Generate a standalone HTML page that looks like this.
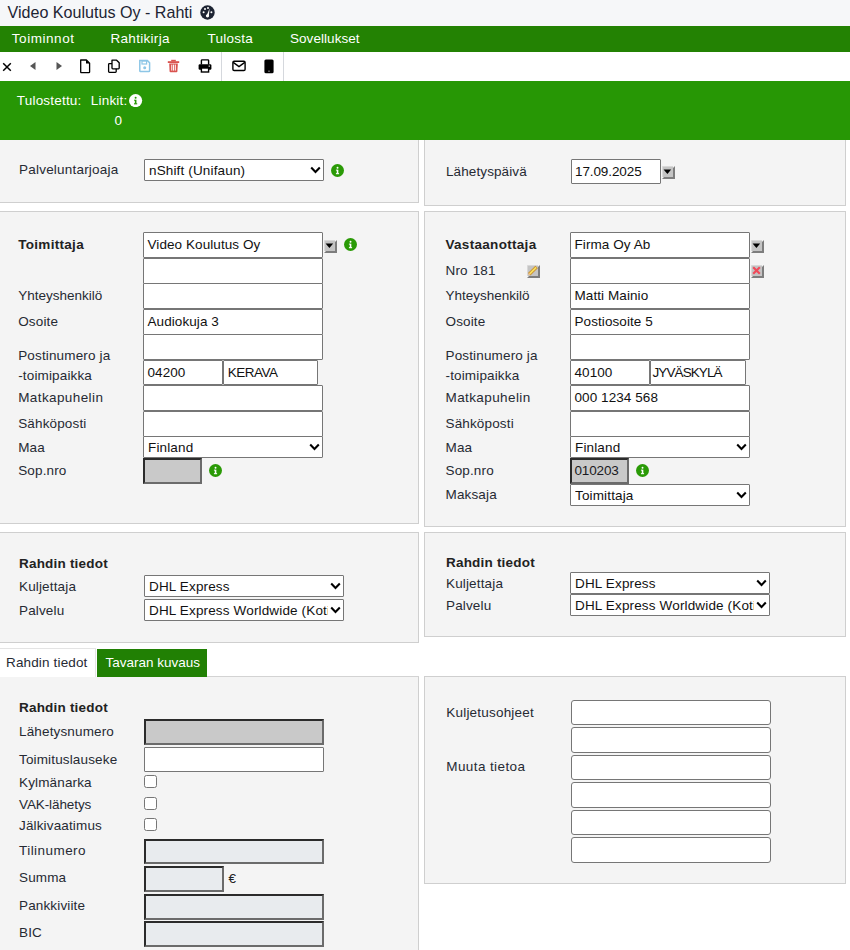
<!DOCTYPE html><html><head><meta charset="utf-8"><style>
html,body{margin:0;padding:0;}
body{width:850px;height:950px;overflow:hidden;position:relative;background:#fff;font-family:"Liberation Sans",sans-serif;}
.a{position:absolute;}
.t{white-space:nowrap;}
</style></head><body>
<div class="a" style="left:0px;top:0px;width:850px;height:26px;background:#f6f7f9;"></div>
<div class="a t" style="left:7.5px;top:2.42px;font-size:16.1px;line-height:20px;font-weight:400;color:#1d2433;letter-spacing:0px;">Video Koulutus Oy - Rahti</div>
<svg class="a" style="left:200px;top:4.5px" width="15" height="15" viewBox="0 0 15 15"><circle cx="7.5" cy="7.5" r="7.2" fill="#1d2433"/><circle cx="3.6" cy="7.2" r="1" fill="#fff"/><circle cx="5" cy="4" r="1" fill="#fff"/><circle cx="8" cy="2.9" r="1" fill="#fff"/><circle cx="11.4" cy="7.2" r="1" fill="#fff"/><path d="M6.3 11.2 L9.6 3.6 L8.8 11.2 Z" fill="#fff"/><circle cx="7.5" cy="10.8" r="1.6" fill="#fff"/></svg>
<div class="a" style="left:0px;top:26px;width:850px;height:26px;background:#238203;"></div>
<div class="a t" style="left:11.8px;top:29.82px;font-size:13.5px;line-height:17px;font-weight:400;color:#fff;letter-spacing:0.55px;">Toiminnot</div>
<div class="a t" style="left:110.5px;top:29.82px;font-size:13.5px;line-height:17px;font-weight:400;color:#fff;letter-spacing:0.3px;">Rahtikirja</div>
<div class="a t" style="left:207.5px;top:29.82px;font-size:13.5px;line-height:17px;font-weight:400;color:#fff;letter-spacing:0.25px;">Tulosta</div>
<div class="a t" style="left:290.0px;top:29.82px;font-size:13.5px;line-height:17px;font-weight:400;color:#fff;letter-spacing:0.05px;">Sovellukset</div>
<div class="a" style="left:0px;top:52px;width:850px;height:29px;background:#fff;"></div>
<div class="a" style="left:221px;top:52px;width:1px;height:29px;background:#d5d8dd;"></div>
<div class="a" style="left:283px;top:52px;width:1px;height:29px;background:#d5d8dd;"></div>
<svg class="a" style="left:2px;top:61.5px" width="10" height="10" viewBox="0 0 10 10"><path d="M1.2 1.2 L8.8 8.8 M8.8 1.2 L1.2 8.8" stroke="#000" stroke-width="1.5"/></svg>
<svg class="a" style="left:29px;top:61px" width="8" height="10" viewBox="0 0 8 10"><path d="M6.5 1 L1 5 L6.5 9 Z" fill="#555"/></svg>
<svg class="a" style="left:55px;top:61px" width="8" height="10" viewBox="0 0 8 10"><path d="M1.5 1 L7 5 L1.5 9 Z" fill="#555"/></svg>
<svg class="a" style="left:79px;top:59px" width="12" height="15" viewBox="0 0 12 15"><path d="M1.7 1 L7.4 1 L10.6 4.2 L10.6 12.9 Q10.6 13.6 9.9 13.6 L2.4 13.6 Q1.7 13.6 1.7 12.9 Z" fill="none" stroke="#000" stroke-width="1.3" stroke-linejoin="round"/><path d="M7 1 L10.6 4.6 L7 4.6 Z" fill="#000"/></svg>
<svg class="a" style="left:107px;top:59px" width="14" height="15" viewBox="0 0 14 15"><path d="M5 1.2 L9.6 1.2 L12.2 3.8 L12.2 9 Q12.2 9.8 11.4 9.8 L5.8 9.8 Q5 9.8 5 9 Z" fill="none" stroke="#000" stroke-width="1.3" stroke-linejoin="round"/><path d="M5 4.6 L2.4 4.6 Q1.6 4.6 1.6 5.4 L1.6 12.6 Q1.6 13.4 2.4 13.4 L8.4 13.4 Q9.2 13.4 9.2 12.6 L9.2 9.8" fill="none" stroke="#000" stroke-width="1.3"/></svg>
<svg class="a" style="left:138px;top:59px" width="13" height="14" viewBox="0 0 13 14"><path d="M1.8 1.6 L9.4 1.6 L11.6 3.8 L11.6 11.8 Q11.6 12.6 10.8 12.6 L2.6 12.6 Q1.8 12.6 1.8 11.8 Z" fill="none" stroke="#8dc6e6" stroke-width="1.5"/><rect x="4" y="2" width="4.6" height="3" fill="none" stroke="#8dc6e6" stroke-width="1.2"/><circle cx="6.7" cy="8.8" r="1.5" fill="#8dc6e6"/></svg>
<svg class="a" style="left:167px;top:59px" width="13" height="14" viewBox="0 0 13 14"><rect x="0.8" y="2.2" width="11.4" height="1.8" fill="#d9534f"/><rect x="4.2" y="0.8" width="4.6" height="1.6" fill="#d9534f"/><path d="M2.2 4.6 L2.6 12.4 Q2.7 13.2 3.5 13.2 L9.5 13.2 Q10.3 13.2 10.4 12.4 L10.8 4.6 Z" fill="#d9534f"/><rect x="4.3" y="5.6" width="1" height="6" fill="#fff"/><rect x="6.05" y="5.6" width="1" height="6" fill="#fff"/><rect x="7.8" y="5.6" width="1" height="6" fill="#fff"/></svg>
<svg class="a" style="left:197.5px;top:59px" width="14" height="14" viewBox="0 0 14 14"><path d="M3.4 5.6 L3.4 1.6 Q3.4 0.9 4.1 0.9 L9.9 0.9 Q10.6 0.9 10.6 1.6 L10.6 5.6" fill="none" stroke="#000" stroke-width="1.4"/><rect x="0.6" y="5.2" width="12.8" height="5.6" rx="1.2" fill="#000"/><rect x="3.4" y="9" width="7.2" height="4" fill="#fff" stroke="#000" stroke-width="1.4"/><rect x="10.6" y="6.6" width="1.4" height="1" fill="#fff"/></svg>
<svg class="a" style="left:232px;top:60px" width="14" height="12" viewBox="0 0 14 12"><rect x="0.9" y="1.3" width="12.2" height="9.2" rx="1.2" fill="none" stroke="#000" stroke-width="1.4"/><path d="M1.2 2.4 L7 6.6 L12.8 2.4" fill="none" stroke="#000" stroke-width="1.4"/></svg>
<svg class="a" style="left:264px;top:59px" width="10" height="15" viewBox="0 0 10 15"><rect x="0.4" y="0.6" width="9.2" height="13.6" rx="1.5" fill="#000"/><rect x="4.2" y="11.6" width="1.6" height="1.2" fill="#888"/></svg>
<div class="a" style="left:0px;top:81px;width:850px;height:59px;background:#279705;"></div>
<div class="a t" style="left:16.8px;top:92.12px;font-size:13.5px;line-height:17px;font-weight:400;color:#fff;letter-spacing:0.2px;">Tulostettu:</div>
<div class="a t" style="left:90.8px;top:92.12px;font-size:13.5px;line-height:17px;font-weight:400;color:#fff;letter-spacing:0.2px;">Linkit:</div>
<svg class="a" style="left:129.4px;top:93.7px" width="13.2" height="13.2" viewBox="0 0 14 14"><circle cx="7" cy="7" r="7" fill="#fff"/><rect x="6.2" y="6.1" width="1.7" height="4.2" fill="#279705"/><rect x="5.3" y="9.8" width="3.4" height="1.2" fill="#279705"/><rect x="5.3" y="6.1" width="1.2" height="1" fill="#279705"/><circle cx="7.05" cy="4.1" r="1.05" fill="#279705"/></svg>
<div class="a t" style="left:114.5px;top:111.82px;font-size:13.5px;line-height:17px;font-weight:400;color:#fff;letter-spacing:0px;">0</div>
<div class="a" style="left:-1px;top:140px;width:420px;height:63px;box-sizing:border-box;background:#f4f4f4;border:1px solid #cfcfcf;border-top:none;"></div>
<div class="a" style="left:424px;top:140px;width:422px;height:66px;box-sizing:border-box;background:#f4f4f4;border:1px solid #cfcfcf;border-top:none;"></div>
<div class="a t" style="left:19.1px;top:160.52px;font-size:13.5px;line-height:17px;font-weight:400;color:#262a33;letter-spacing:0.2px;">Palveluntarjoaja</div>
<div class="a" style="left:144px;top:159px;width:180px;height:22px;box-sizing:border-box;border:1px solid #767676;border-radius:1px;background:#fff;"></div>
<div class="a t" style="left:149px;top:161.82px;width:159px;overflow:hidden;font-size:13.5px;line-height:17px;color:#111;letter-spacing:0.15px">nShift (Unifaun)</div>
<svg class="a" style="left:309.5px;top:166.0px" width="11" height="8" viewBox="0 0 11 8"><path d="M1.2 1.6 L5.5 5.9 L9.8 1.6" fill="none" stroke="#000" stroke-width="2.1"/></svg>
<svg class="a" style="left:330.5px;top:163.5px" width="13.0" height="13.0" viewBox="0 0 14 14"><circle cx="7" cy="7" r="7" fill="#2a9a06"/><rect x="6.2" y="6.1" width="1.7" height="4.2" fill="#fff"/><rect x="5.3" y="9.8" width="3.4" height="1.2" fill="#fff"/><rect x="5.3" y="6.1" width="1.2" height="1" fill="#fff"/><circle cx="7.05" cy="4.1" r="1.05" fill="#fff"/></svg>
<div class="a t" style="left:446.0px;top:162.82px;font-size:13.5px;line-height:17px;font-weight:400;color:#262a33;letter-spacing:0.1px;">Lähetyspäivä</div>
<div class="a" style="left:571px;top:159px;width:90px;height:25px;box-sizing:border-box;border:1px solid #767676;border-radius:1px;background:#fff;"></div>
<div class="a t" style="left:575.0px;top:162.82px;font-size:13.5px;line-height:17px;font-weight:400;color:#111;letter-spacing:-0.1px;">17.09.2025</div>
<svg class="a" style="left:662px;top:166px" width="13" height="13" viewBox="0 0 13 13"><path d="M13 0 L13 13 L0 13 L2 11 L11 11 L11 2 Z" fill="#7d7d7d"/><rect x="0" y="0" width="11" height="11" fill="#dedede"/><rect x="0.8" y="0.8" width="10.2" height="10.2" fill="#c4c4c4"/><path d="M1.6 3.6 L9.2 3.6 L5.4 8 Z" fill="#000"/></svg>
<div class="a" style="left:-1px;top:211px;width:420px;height:313px;box-sizing:border-box;background:#f4f4f4;border:1px solid #cfcfcf;"></div>
<div class="a" style="left:424px;top:211px;width:422px;height:316px;box-sizing:border-box;background:#f4f4f4;border:1px solid #cfcfcf;"></div>
<div class="a t" style="left:18.2px;top:236.22px;font-size:13.5px;line-height:17px;font-weight:700;color:#222;letter-spacing:0.3px;">Toimittaja</div>
<div class="a" style="left:143px;top:232px;width:180px;height:26px;box-sizing:border-box;border:1px solid #767676;border-radius:1px;background:#fff;"></div>
<div class="a t" style="left:147.5px;top:235.82px;font-size:13.5px;line-height:17px;font-weight:400;color:#111;letter-spacing:0.08px;">Video Koulutus Oy</div>
<svg class="a" style="left:324px;top:240px" width="13" height="13" viewBox="0 0 13 13"><path d="M13 0 L13 13 L0 13 L2 11 L11 11 L11 2 Z" fill="#7d7d7d"/><rect x="0" y="0" width="11" height="11" fill="#dedede"/><rect x="0.8" y="0.8" width="10.2" height="10.2" fill="#c4c4c4"/><path d="M1.6 3.6 L9.2 3.6 L5.4 8 Z" fill="#000"/></svg>
<svg class="a" style="left:343.5px;top:237.5px" width="13.0" height="13.0" viewBox="0 0 14 14"><circle cx="7" cy="7" r="7" fill="#2a9a06"/><rect x="6.2" y="6.1" width="1.7" height="4.2" fill="#fff"/><rect x="5.3" y="9.8" width="3.4" height="1.2" fill="#fff"/><rect x="5.3" y="6.1" width="1.2" height="1" fill="#fff"/><circle cx="7.05" cy="4.1" r="1.05" fill="#fff"/></svg>
<div class="a" style="left:143px;top:258px;width:180px;height:26px;box-sizing:border-box;border:1px solid #767676;border-radius:1px;background:#fff;"></div>
<div class="a t" style="left:18.2px;top:287.12px;font-size:13.5px;line-height:17px;font-weight:400;color:#262a33;letter-spacing:0.0px;">Yhteyshenkilö</div>
<div class="a" style="left:143px;top:283px;width:180px;height:26px;box-sizing:border-box;border:1px solid #767676;border-radius:1px;background:#fff;"></div>
<div class="a t" style="left:18.2px;top:312.82px;font-size:13.5px;line-height:17px;font-weight:400;color:#262a33;letter-spacing:0.15px;">Osoite</div>
<div class="a" style="left:143px;top:309px;width:180px;height:26px;box-sizing:border-box;border:1px solid #767676;border-radius:1px;background:#fff;"></div>
<div class="a t" style="left:147.5px;top:312.82px;font-size:13.5px;line-height:17px;font-weight:400;color:#111;letter-spacing:0.08px;">Audiokuja 3</div>
<div class="a" style="left:143px;top:334px;width:180px;height:26px;box-sizing:border-box;border:1px solid #767676;border-radius:1px;background:#fff;"></div>
<div class="a t" style="left:18.2px;top:346.82px;font-size:13.5px;line-height:17px;font-weight:400;color:#262a33;letter-spacing:0.15px;">Postinumero ja</div>
<div class="a t" style="left:18.2px;top:366.82px;font-size:13.5px;line-height:17px;font-weight:400;color:#262a33;letter-spacing:0.15px;">-toimipaikka</div>
<div class="a" style="left:143px;top:360px;width:80px;height:25px;box-sizing:border-box;border:1px solid #767676;border-radius:1px;background:#fff;"></div>
<div class="a t" style="left:147.5px;top:363.82px;font-size:13.5px;line-height:17px;font-weight:400;color:#111;letter-spacing:0.08px;">04200</div>
<div class="a" style="left:222.8px;top:360px;width:95px;height:25px;box-sizing:border-box;border:1px solid #767676;border-radius:1px;background:#fff;"></div>
<div class="a t" style="left:227.8px;top:363.82px;font-size:13.5px;line-height:17px;font-weight:400;color:#111;letter-spacing:-0.5px;">KERAVA</div>
<div class="a t" style="left:18.2px;top:389.12px;font-size:13.5px;line-height:17px;font-weight:400;color:#262a33;letter-spacing:0.4px;">Matkapuhelin</div>
<div class="a" style="left:143px;top:385px;width:180px;height:26px;box-sizing:border-box;border:1px solid #767676;border-radius:1px;background:#fff;"></div>
<div class="a t" style="left:18.2px;top:414.82px;font-size:13.5px;line-height:17px;font-weight:400;color:#262a33;letter-spacing:0.15px;">Sähköposti</div>
<div class="a" style="left:143px;top:410.5px;width:180px;height:26px;box-sizing:border-box;border:1px solid #767676;border-radius:1px;background:#fff;"></div>
<div class="a t" style="left:18.2px;top:438.82px;font-size:13.5px;line-height:17px;font-weight:400;color:#262a33;letter-spacing:0.15px;">Maa</div>
<div class="a" style="left:143px;top:436px;width:180px;height:22px;box-sizing:border-box;border:1px solid #767676;border-radius:1px;background:#fff;"></div>
<div class="a t" style="left:148px;top:438.82px;width:159px;overflow:hidden;font-size:13.5px;line-height:17px;color:#111;letter-spacing:0.15px">Finland</div>
<svg class="a" style="left:308.5px;top:443.0px" width="11" height="8" viewBox="0 0 11 8"><path d="M1.2 1.6 L5.5 5.9 L9.8 1.6" fill="none" stroke="#000" stroke-width="2.1"/></svg>
<div class="a t" style="left:18.2px;top:461.82px;font-size:13.5px;line-height:17px;font-weight:400;color:#262a33;letter-spacing:0.15px;">Sop.nro</div>
<div class="a" style="left:143px;top:458px;width:59px;height:26px;box-sizing:border-box;border:2px solid #2b2b2b;border-right-color:#6b6b6b;border-bottom-color:#6b6b6b;background:#c9c9c9;"></div>
<svg class="a" style="left:208.5px;top:463.5px" width="13.0" height="13.0" viewBox="0 0 14 14"><circle cx="7" cy="7" r="7" fill="#2a9a06"/><rect x="6.2" y="6.1" width="1.7" height="4.2" fill="#fff"/><rect x="5.3" y="9.8" width="3.4" height="1.2" fill="#fff"/><rect x="5.3" y="6.1" width="1.2" height="1" fill="#fff"/><circle cx="7.05" cy="4.1" r="1.05" fill="#fff"/></svg>
<div class="a t" style="left:445.5px;top:235.82px;font-size:13.5px;line-height:17px;font-weight:700;color:#222;letter-spacing:0.3px;">Vastaanottaja</div>
<div class="a" style="left:570px;top:232px;width:180px;height:26px;box-sizing:border-box;border:1px solid #767676;border-radius:1px;background:#fff;"></div>
<div class="a t" style="left:574.5px;top:235.82px;font-size:13.5px;line-height:17px;font-weight:400;color:#111;letter-spacing:0.08px;">Firma Oy Ab</div>
<svg class="a" style="left:751px;top:240px" width="13" height="13" viewBox="0 0 13 13"><path d="M13 0 L13 13 L0 13 L2 11 L11 11 L11 2 Z" fill="#7d7d7d"/><rect x="0" y="0" width="11" height="11" fill="#dedede"/><rect x="0.8" y="0.8" width="10.2" height="10.2" fill="#c4c4c4"/><path d="M1.6 3.6 L9.2 3.6 L5.4 8 Z" fill="#000"/></svg>
<div class="a t" style="left:445.5px;top:262.22px;font-size:13.5px;line-height:17px;font-weight:400;color:#262a33;letter-spacing:0.15px;">Nro</div>
<div class="a t" style="left:472.7px;top:262.22px;font-size:13.5px;line-height:17px;font-weight:400;color:#262a33;letter-spacing:0.15px;">181</div>
<svg class="a" style="left:527px;top:265px" width="13" height="13" viewBox="0 0 13 13"><path d="M13 0 L13 13 L0 13 L2 11 L11 11 L11 2 Z" fill="#7d7d7d"/><rect x="0" y="0" width="11" height="11" fill="#dedede"/><rect x="0.8" y="0.8" width="10.2" height="10.2" fill="#c4c4c4"/><path d="M2.2 9.2 L9.6 2" stroke="#c98a2a" stroke-width="3.4"/><path d="M2.6 8.8 L9.2 2.4" stroke="#f6e060" stroke-width="1.8"/><path d="M1.6 10 L2.8 8.6" stroke="#eec08a" stroke-width="1.6"/></svg>
<div class="a" style="left:570px;top:258px;width:180px;height:26px;box-sizing:border-box;border:1px solid #767676;border-radius:1px;background:#fff;"></div>
<svg class="a" style="left:751px;top:265px" width="13" height="13" viewBox="0 0 13 13"><path d="M13 0 L13 13 L0 13 L2 11 L11 11 L11 2 Z" fill="#7d7d7d"/><rect x="0" y="0" width="11" height="11" fill="#dedede"/><rect x="0.8" y="0.8" width="10.2" height="10.2" fill="#c4c4c4"/><path d="M2.2 2.2 L8.8 8.8 M8.8 2.2 L2.2 8.8" stroke="#f04a5a" stroke-width="2.2"/></svg>
<div class="a t" style="left:445.5px;top:287.12px;font-size:13.5px;line-height:17px;font-weight:400;color:#262a33;letter-spacing:0.0px;">Yhteyshenkilö</div>
<div class="a" style="left:570px;top:283px;width:180px;height:26px;box-sizing:border-box;border:1px solid #767676;border-radius:1px;background:#fff;"></div>
<div class="a t" style="left:574.5px;top:286.82px;font-size:13.5px;line-height:17px;font-weight:400;color:#111;letter-spacing:0.08px;">Matti Mainio</div>
<div class="a t" style="left:445.5px;top:312.82px;font-size:13.5px;line-height:17px;font-weight:400;color:#262a33;letter-spacing:0.15px;">Osoite</div>
<div class="a" style="left:570px;top:309px;width:180px;height:26px;box-sizing:border-box;border:1px solid #767676;border-radius:1px;background:#fff;"></div>
<div class="a t" style="left:574.5px;top:312.82px;font-size:13.5px;line-height:17px;font-weight:400;color:#111;letter-spacing:0.08px;">Postiosoite 5</div>
<div class="a" style="left:570px;top:334px;width:180px;height:26px;box-sizing:border-box;border:1px solid #767676;border-radius:1px;background:#fff;"></div>
<div class="a t" style="left:445.5px;top:346.82px;font-size:13.5px;line-height:17px;font-weight:400;color:#262a33;letter-spacing:0.15px;">Postinumero ja</div>
<div class="a t" style="left:445.5px;top:366.82px;font-size:13.5px;line-height:17px;font-weight:400;color:#262a33;letter-spacing:0.15px;">-toimipaikka</div>
<div class="a" style="left:570px;top:360px;width:80px;height:25px;box-sizing:border-box;border:1px solid #767676;border-radius:1px;background:#fff;"></div>
<div class="a t" style="left:574.5px;top:363.82px;font-size:13.5px;line-height:17px;font-weight:400;color:#111;letter-spacing:0.08px;">40100</div>
<div class="a" style="left:649.5px;top:360px;width:96px;height:25px;box-sizing:border-box;border:1px solid #767676;border-radius:1px;background:#fff;"></div>
<div class="a t" style="left:652.5px;top:363.82px;font-size:13.5px;line-height:17px;font-weight:400;color:#111;letter-spacing:-0.9px;">JYVÄSKYLÄ</div>
<div class="a t" style="left:445.5px;top:389.12px;font-size:13.5px;line-height:17px;font-weight:400;color:#262a33;letter-spacing:0.4px;">Matkapuhelin</div>
<div class="a" style="left:570px;top:385px;width:180px;height:26px;box-sizing:border-box;border:1px solid #767676;border-radius:1px;background:#fff;"></div>
<div class="a t" style="left:574.5px;top:388.82px;font-size:13.5px;line-height:17px;font-weight:400;color:#111;letter-spacing:0.08px;">000 1234 568</div>
<div class="a t" style="left:445.5px;top:414.82px;font-size:13.5px;line-height:17px;font-weight:400;color:#262a33;letter-spacing:0.15px;">Sähköposti</div>
<div class="a" style="left:570px;top:410.5px;width:180px;height:26px;box-sizing:border-box;border:1px solid #767676;border-radius:1px;background:#fff;"></div>
<div class="a t" style="left:445.5px;top:438.82px;font-size:13.5px;line-height:17px;font-weight:400;color:#262a33;letter-spacing:0.15px;">Maa</div>
<div class="a" style="left:570px;top:436px;width:180px;height:22px;box-sizing:border-box;border:1px solid #767676;border-radius:1px;background:#fff;"></div>
<div class="a t" style="left:575px;top:438.82px;width:159px;overflow:hidden;font-size:13.5px;line-height:17px;color:#111;letter-spacing:0.15px">Finland</div>
<svg class="a" style="left:735.5px;top:443.0px" width="11" height="8" viewBox="0 0 11 8"><path d="M1.2 1.6 L5.5 5.9 L9.8 1.6" fill="none" stroke="#000" stroke-width="2.1"/></svg>
<div class="a t" style="left:445.5px;top:461.82px;font-size:13.5px;line-height:17px;font-weight:400;color:#262a33;letter-spacing:0.15px;">Sop.nro</div>
<div class="a" style="left:570px;top:458px;width:59px;height:26px;box-sizing:border-box;border:2px solid #2b2b2b;border-right-color:#6b6b6b;border-bottom-color:#6b6b6b;background:#c9c9c9;"></div>
<div class="a t" style="left:574.5px;top:461.82px;font-size:13.5px;line-height:17px;font-weight:400;color:#1a1a22;letter-spacing:-0.15px;">010203</div>
<svg class="a" style="left:635.5px;top:463.5px" width="13.0" height="13.0" viewBox="0 0 14 14"><circle cx="7" cy="7" r="7" fill="#2a9a06"/><rect x="6.2" y="6.1" width="1.7" height="4.2" fill="#fff"/><rect x="5.3" y="9.8" width="3.4" height="1.2" fill="#fff"/><rect x="5.3" y="6.1" width="1.2" height="1" fill="#fff"/><circle cx="7.05" cy="4.1" r="1.05" fill="#fff"/></svg>
<div class="a t" style="left:445.5px;top:485.82px;font-size:13.5px;line-height:17px;font-weight:400;color:#262a33;letter-spacing:0.15px;">Maksaja</div>
<div class="a" style="left:570px;top:484px;width:180px;height:22px;box-sizing:border-box;border:1px solid #767676;border-radius:1px;background:#fff;"></div>
<div class="a t" style="left:575px;top:486.82px;width:159px;overflow:hidden;font-size:13.5px;line-height:17px;color:#111;letter-spacing:0.15px">Toimittaja</div>
<svg class="a" style="left:735.5px;top:491.0px" width="11" height="8" viewBox="0 0 11 8"><path d="M1.2 1.6 L5.5 5.9 L9.8 1.6" fill="none" stroke="#000" stroke-width="2.1"/></svg>
<div class="a" style="left:-1px;top:532px;width:420px;height:111px;box-sizing:border-box;background:#f4f4f4;border:1px solid #cfcfcf;"></div>
<div class="a" style="left:424px;top:532px;width:422px;height:105px;box-sizing:border-box;background:#f4f4f4;border:1px solid #cfcfcf;"></div>
<div class="a t" style="left:19.0px;top:554.82px;font-size:13.5px;line-height:17px;font-weight:700;color:#222;letter-spacing:0.2px;">Rahdin tiedot</div>
<div class="a t" style="left:19.0px;top:577.82px;font-size:13.5px;line-height:17px;font-weight:400;color:#262a33;letter-spacing:0.15px;">Kuljettaja</div>
<div class="a" style="left:144px;top:575px;width:200px;height:22px;box-sizing:border-box;border:1px solid #767676;border-radius:1px;background:#fff;"></div>
<div class="a t" style="left:149px;top:577.82px;width:179px;overflow:hidden;font-size:13.5px;line-height:17px;color:#111;letter-spacing:0.15px">DHL Express</div>
<svg class="a" style="left:329.5px;top:582.0px" width="11" height="8" viewBox="0 0 11 8"><path d="M1.2 1.6 L5.5 5.9 L9.8 1.6" fill="none" stroke="#000" stroke-width="2.1"/></svg>
<div class="a t" style="left:19.0px;top:601.62px;font-size:13.5px;line-height:17px;font-weight:400;color:#262a33;letter-spacing:0.15px;">Palvelu</div>
<div class="a" style="left:144px;top:599px;width:200px;height:22px;box-sizing:border-box;border:1px solid #767676;border-radius:1px;background:#fff;"></div>
<div class="a t" style="left:149px;top:601.82px;width:179px;overflow:hidden;font-size:13.5px;line-height:17px;color:#111;letter-spacing:0.15px">DHL Express Worldwide (Kotimaa)</div>
<svg class="a" style="left:329.5px;top:606.0px" width="11" height="8" viewBox="0 0 11 8"><path d="M1.2 1.6 L5.5 5.9 L9.8 1.6" fill="none" stroke="#000" stroke-width="2.1"/></svg>
<div class="a t" style="left:446.0px;top:553.82px;font-size:13.5px;line-height:17px;font-weight:700;color:#222;letter-spacing:0.2px;">Rahdin tiedot</div>
<div class="a t" style="left:446.0px;top:575.02px;font-size:13.5px;line-height:17px;font-weight:400;color:#262a33;letter-spacing:0.15px;">Kuljettaja</div>
<div class="a" style="left:570px;top:572px;width:200px;height:22px;box-sizing:border-box;border:1px solid #767676;border-radius:1px;background:#fff;"></div>
<div class="a t" style="left:575px;top:574.82px;width:179px;overflow:hidden;font-size:13.5px;line-height:17px;color:#111;letter-spacing:0.15px">DHL Express</div>
<svg class="a" style="left:755.5px;top:579.0px" width="11" height="8" viewBox="0 0 11 8"><path d="M1.2 1.6 L5.5 5.9 L9.8 1.6" fill="none" stroke="#000" stroke-width="2.1"/></svg>
<div class="a t" style="left:446.0px;top:596.62px;font-size:13.5px;line-height:17px;font-weight:400;color:#262a33;letter-spacing:0.15px;">Palvelu</div>
<div class="a" style="left:570px;top:594px;width:200px;height:22px;box-sizing:border-box;border:1px solid #767676;border-radius:1px;background:#fff;"></div>
<div class="a t" style="left:575px;top:596.82px;width:179px;overflow:hidden;font-size:13.5px;line-height:17px;color:#111;letter-spacing:0.15px">DHL Express Worldwide (Kotimaa)</div>
<svg class="a" style="left:755.5px;top:601.0px" width="11" height="8" viewBox="0 0 11 8"><path d="M1.2 1.6 L5.5 5.9 L9.8 1.6" fill="none" stroke="#000" stroke-width="2.1"/></svg>
<div class="a" style="left:0px;top:648px;width:96px;height:29px;box-sizing:border-box;border-top:1px solid #e4e4e4;border-right:1px solid #e4e4e4;background:#fff;"></div>
<div class="a t" style="left:6.0px;top:653.82px;font-size:13.5px;line-height:17px;font-weight:400;color:#262a33;letter-spacing:0.15px;">Rahdin tiedot</div>
<div class="a" style="left:97px;top:649px;width:110px;height:28px;background:#218004;"></div>
<div class="a t" style="left:105.5px;top:653.82px;font-size:13.5px;line-height:17px;font-weight:400;color:#fff;letter-spacing:0px;">Tavaran kuvaus</div>
<div class="a" style="left:-1px;top:677px;width:420px;height:280px;box-sizing:border-box;background:#f4f4f4;border:1px solid #cfcfcf;border-top:none;"></div>
<div class="a" style="left:207px;top:676px;width:212px;height:1px;background:#d3d3d3;"></div>
<div class="a" style="left:424px;top:676px;width:422px;height:208px;box-sizing:border-box;background:#f4f4f4;border:1px solid #cfcfcf;"></div>
<div class="a t" style="left:19.0px;top:698.82px;font-size:13.5px;line-height:17px;font-weight:700;color:#222;letter-spacing:0.2px;">Rahdin tiedot</div>
<div class="a t" style="left:19.0px;top:722.82px;font-size:13.5px;line-height:17px;font-weight:400;color:#262a33;letter-spacing:0.15px;">Lähetysnumero</div>
<div class="a" style="left:144px;top:719px;width:180px;height:26px;box-sizing:border-box;border:2px solid #2b2b2b;border-right-color:#6b6b6b;border-bottom-color:#6b6b6b;background:#c9c9c9;"></div>
<div class="a t" style="left:19.0px;top:750.82px;font-size:13.5px;line-height:17px;font-weight:400;color:#262a33;letter-spacing:0.15px;">Toimituslauseke</div>
<div class="a" style="left:144px;top:747px;width:180px;height:25px;box-sizing:border-box;border:1px solid #767676;border-radius:1px;background:#fff;"></div>
<div class="a t" style="left:19.0px;top:773.82px;font-size:13.5px;line-height:17px;font-weight:400;color:#262a33;letter-spacing:0.15px;">Kylmänarka</div>
<div class="a" style="left:144px;top:775px;width:13px;height:13px;box-sizing:border-box;border:1px solid #767676;border-radius:2.5px;background:#fff;"></div>
<div class="a t" style="left:19.0px;top:795.62px;font-size:13.5px;line-height:17px;font-weight:400;color:#262a33;letter-spacing:-0.1px;">VAK-lähetys</div>
<div class="a" style="left:144px;top:797px;width:13px;height:13px;box-sizing:border-box;border:1px solid #767676;border-radius:2.5px;background:#fff;"></div>
<div class="a t" style="left:19.0px;top:816.82px;font-size:13.5px;line-height:17px;font-weight:400;color:#262a33;letter-spacing:0.15px;">Jälkivaatimus</div>
<div class="a" style="left:144px;top:818px;width:13px;height:13px;box-sizing:border-box;border:1px solid #767676;border-radius:2.5px;background:#fff;"></div>
<div class="a t" style="left:19.0px;top:841.62px;font-size:13.5px;line-height:17px;font-weight:400;color:#262a33;letter-spacing:0.45px;">Tilinumero</div>
<div class="a" style="left:144px;top:839px;width:180px;height:25px;box-sizing:border-box;border:2px solid #2b2b2b;border-right-color:#6b6b6b;border-bottom-color:#6b6b6b;background:#e8ebee;"></div>
<div class="a t" style="left:19.0px;top:868.82px;font-size:13.5px;line-height:17px;font-weight:400;color:#262a33;letter-spacing:0.15px;">Summa</div>
<div class="a" style="left:144px;top:866px;width:80px;height:26px;box-sizing:border-box;border:2px solid #2b2b2b;border-right-color:#6b6b6b;border-bottom-color:#6b6b6b;background:#e8ebee;"></div>
<div class="a t" style="left:19.0px;top:896.82px;font-size:13.5px;line-height:17px;font-weight:400;color:#262a33;letter-spacing:0.15px;">Pankkiviite</div>
<div class="a" style="left:144px;top:894px;width:180px;height:26px;box-sizing:border-box;border:2px solid #2b2b2b;border-right-color:#6b6b6b;border-bottom-color:#6b6b6b;background:#e8ebee;"></div>
<div class="a t" style="left:19.0px;top:923.82px;font-size:13.5px;line-height:17px;font-weight:400;color:#262a33;letter-spacing:0.15px;">BIC</div>
<div class="a" style="left:144px;top:921px;width:180px;height:26px;box-sizing:border-box;border:2px solid #2b2b2b;border-right-color:#6b6b6b;border-bottom-color:#6b6b6b;background:#e8ebee;"></div>
<div class="a t" style="left:228.5px;top:869.52px;font-size:13.5px;line-height:17px;font-weight:400;color:#222;letter-spacing:0px;">€</div>
<div class="a t" style="left:446.3px;top:703.82px;font-size:13.5px;line-height:17px;font-weight:400;color:#262a33;letter-spacing:0.2px;">Kuljetusohjeet</div>
<div class="a t" style="left:446.3px;top:758.32px;font-size:13.5px;line-height:17px;font-weight:400;color:#262a33;letter-spacing:0.4px;">Muuta tietoa</div>
<div class="a" style="left:571px;top:700px;width:200px;height:25px;box-sizing:border-box;border:1px solid #767676;border-radius:1px;background:#fff;border-radius:3px;"></div>
<div class="a" style="left:571px;top:727px;width:200px;height:26px;box-sizing:border-box;border:1px solid #767676;border-radius:1px;background:#fff;border-radius:3px;"></div>
<div class="a" style="left:571px;top:755px;width:200px;height:25px;box-sizing:border-box;border:1px solid #767676;border-radius:1px;background:#fff;border-radius:3px;"></div>
<div class="a" style="left:571px;top:782px;width:200px;height:26px;box-sizing:border-box;border:1px solid #767676;border-radius:1px;background:#fff;border-radius:3px;"></div>
<div class="a" style="left:571px;top:810px;width:200px;height:25px;box-sizing:border-box;border:1px solid #767676;border-radius:1px;background:#fff;border-radius:3px;"></div>
<div class="a" style="left:571px;top:837px;width:200px;height:26px;box-sizing:border-box;border:1px solid #767676;border-radius:1px;background:#fff;border-radius:3px;"></div>
</body></html>
